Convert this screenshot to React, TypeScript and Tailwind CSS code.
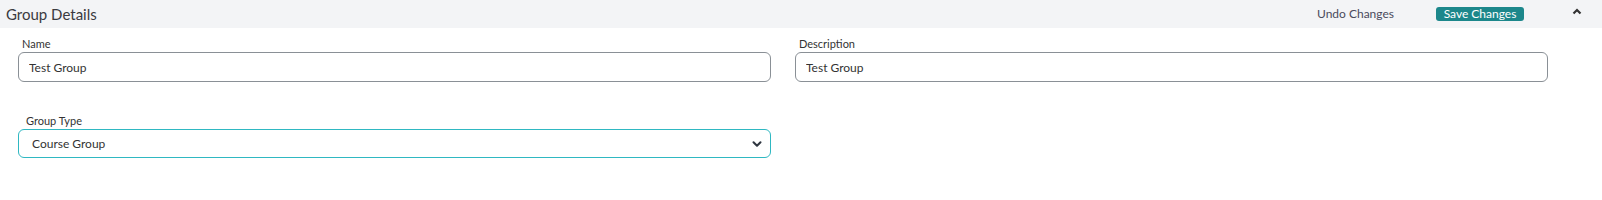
import { ChevronDown } from "lucide-react";

export default function App() {
  return (
    <div className="w-full h-[200px] bg-white font-['Lato',sans-serif] text-[#3b3b44]">
      <div className="flex items-center h-[28px] bg-[#f3f4f6] pl-[6px] pr-[18px]">
        <h2 className="text-[15px] text-[#3a3a40] flex-1 leading-none">Group Details</h2>
        <button className="text-[12px] text-[#4a4a5c] mr-[42px]">Undo Changes</button>
        <button className="h-[14px] w-[88px] rounded-[3px] bg-[#1c878b] text-white text-[12px] leading-none flex items-center justify-center">
          Save Changes
        </button>
        <div className="w-[60px] flex justify-end pr-[2px]">
          <svg width="10" height="7" viewBox="0 0 10 7" className="mb-[6px]">
            <path d="M1.5 5.5 L5 2 L8.5 5.5" fill="none" stroke="#333" strokeWidth="2.2" />
          </svg>
        </div>
      </div>

      <div className="grid grid-cols-2 gap-x-[24px] pl-[18px] pr-[54px] pt-[8px]">
        <div className="flex flex-col">
          <label className="text-[11px] text-[#333] pl-[4px] h-[16px] leading-[16px]">Name</label>
          <input
            defaultValue="Test Group"
            className="h-[30px] w-full border border-[#8a9096] rounded-[6px] px-[10px] text-[12px] text-[#333] outline-none"
          />
        </div>
        <div className="flex flex-col">
          <label className="text-[11px] text-[#333] pl-[4px] h-[16px] leading-[16px]">Description</label>
          <input
            defaultValue="Test Group"
            className="h-[30px] w-full border border-[#8a9096] rounded-[6px] px-[10px] text-[12px] text-[#333] outline-none"
          />
        </div>
        <div className="flex flex-col pt-[31px]">
          <label className="text-[11px] text-[#333] pl-[8px] h-[16px] leading-[16px]">Group Type</label>
          <div className="h-[29px] border border-[#2fb8c2] rounded-[6px] flex items-center pl-[13px] text-[12px] text-[#333]">
            <span className="flex-1">Course Group</span>
            <ChevronDown className="w-[14px] h-[14px] mr-[6px] text-[#2f3640]" strokeWidth={3.5} />
          </div>
        </div>
      </div>
    </div>
  );
}
